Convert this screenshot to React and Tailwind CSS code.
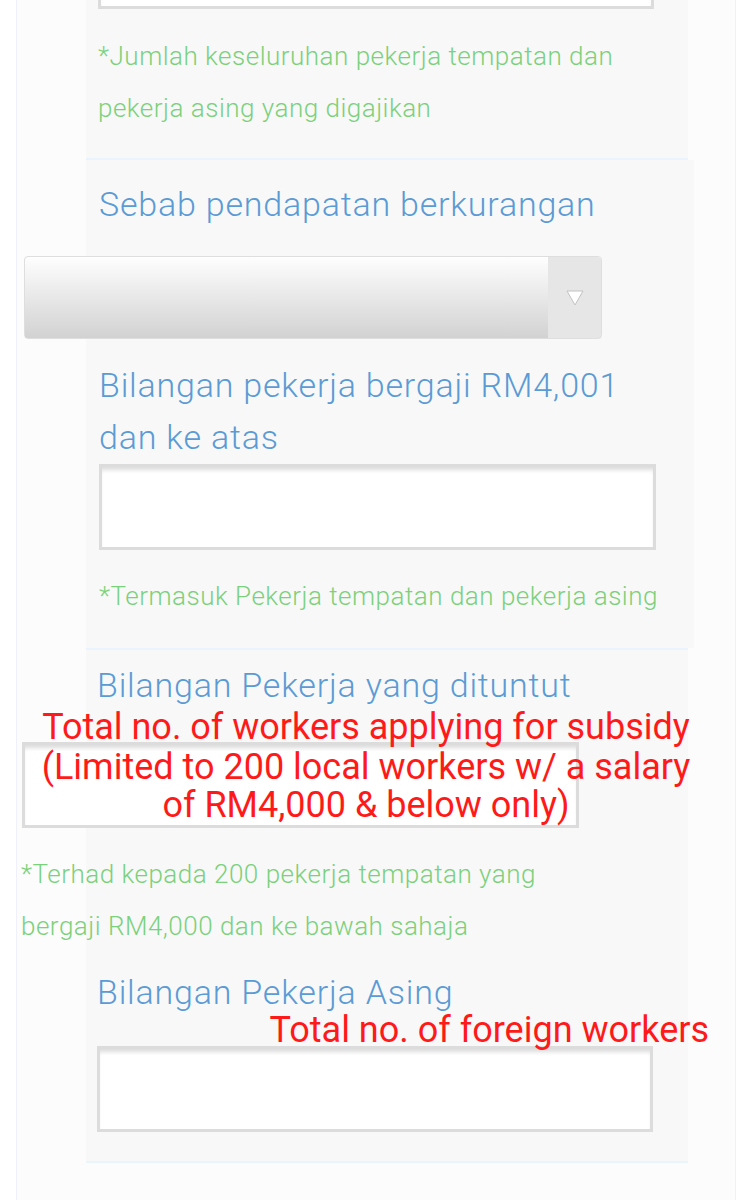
import React from 'react';

const labelFont = "font-['Roboto',sans-serif] font-light text-[34px] text-[#5b9bd5] tracking-[0.8px]";
const labelCls = `${labelFont} leading-[52px]`;
const noteCls = "font-['Roboto',sans-serif] font-light text-[26px] leading-[52px] text-[#7bd17b] tracking-[0.5px]";
const noteRed = "font-['Roboto',sans-serif] text-[36px] leading-[32px] text-[#ff1a1a]";

const TextInput = ({ className = '' }) => (
  <input
    type="text"
    className={`block h-[86px] bg-white border-[3px] border-[#dcdcdc] shadow-[inset_0_5px_4px_-2px_rgba(0,0,0,0.14)] outline-none ${className}`}
  />
);

const Divider = () => <div className="h-[2px] w-[602px] bg-[#eaf4fe]" />;

const SelectBox = () => (
  <div className="flex h-[83px] w-[578px] -ml-[75px] rounded-[4px] border border-[#dedede] overflow-hidden bg-gradient-to-b from-[#fefefe] to-[#d2d2d2]">
    <div className="flex-1" />
    <div className="w-[53px] flex items-center justify-center bg-[#e6e6e6]">
      <svg width="22" height="20" viewBox="0 0 22 20">
        <path d="M3 3 L19 3 L11 17 Z" fill="#ffffff" stroke="#c2c2c2" strokeWidth="1" strokeLinejoin="round" />
      </svg>
    </div>
  </div>
);

export default function App() {
  return (
    <div className="relative h-[1200px] bg-white overflow-hidden">
      <div className="ml-[16px] w-[720px] h-[1300px] bg-[#fcfcfd] border-x border-[#eff0fa]">
        <div className="ml-[69px] w-[602px]">
          {/* total workers */}
          <section className="bg-[#f8f8f8] pl-[12px] pb-[24px] -mt-[77px]">
            <TextInput className="w-[556px]" />
            <p className={`${noteCls} mt-[21px]`}>
              *Jumlah keseluruhan pekerja tempatan dan<br />pekerja asing yang digajikan
            </p>
          </section>
          <Divider />

          {/* reduced income */}
          <section className="bg-[#f8f8f8] w-[608px] pl-[13px] pt-[18px] pb-[26px]">
            <div className={labelCls}>Sebab pendapatan berkurangan</div>
            <div className="mt-[26px]">
              <SelectBox />
            </div>
            <div className={`${labelCls} mt-[20px]`}>
              Bilangan pekerja bergaji RM4,001<br />dan ke atas
            </div>
            <TextInput className="w-[557px] mt-[1px]" />
            <p className={`${noteCls} mt-[20px]`}>*Termasuk Pekerja tempatan dan pekerja asing</p>
          </section>
          <Divider />

          {/* claimed & foreign workers */}
          <section className="bg-[#f8f8f8] pl-[11px] pt-[17px] pb-[29px]">
            <div className={`${labelFont} leading-[36px]`}>Bilangan Pekerja yang dituntut</div>
            <TextInput className="w-[557px] -ml-[75px] mt-[39px]" />
            <p className={`${noteCls} -ml-[76px] mt-[20px]`}>
              *Terhad kepada 200 pekerja tempatan yang<br />bergaji RM4,000 dan ke bawah sahaja
            </p>
            <div className={`${labelFont} leading-[36px] mt-[22px]`}>Bilangan Pekerja Asing</div>
            <TextInput className="w-[556px] mt-[36px]" />
          </section>
          <Divider />
        </div>
      </div>

      {/* annotations */}
      <div className={`${noteRed} absolute left-0 top-[711px] w-[732px] text-center`}>
        <div>Total no. of workers applying for subsidy</div>
        <div className="mt-[8px]">(Limited to 200 local workers w/ a salary</div>
        <div className="mt-[6px]">of RM4,000 &amp; below only)</div>
      </div>
      <div className={`${noteRed} absolute right-[41px] top-[1014px]`}>Total no. of foreign workers</div>
    </div>
  );
}
